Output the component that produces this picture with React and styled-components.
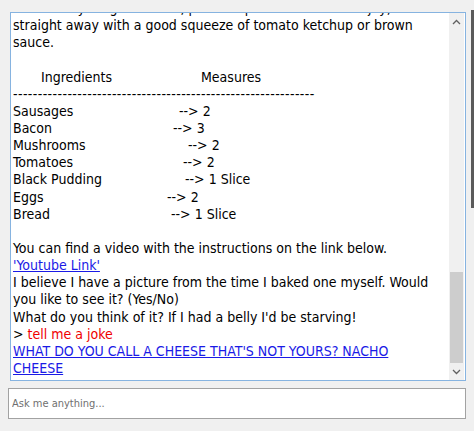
import React from 'react'
import styled, { createGlobalStyle } from 'styled-components'

const GlobalStyle = createGlobalStyle`
  html, body {
    margin: 0;
    padding: 0;
    background: #f0f0f0;
  }
`

const Page = styled.div`
  position: relative;
  display: flex;
  flex-direction: column;
  gap: 7px;
  padding-top: 12px;
  width: 474px;
  height: 431px;
  box-sizing: border-box;
  font-family: "DejaVu Sans Condensed", "DejaVu Sans", sans-serif;
`

/* edge of the window behind this one, peeking out on the right */
const BehindEdge = styled.div`
  position: absolute;
  top: 10px;
  right: 0;
  width: 3px;
  height: 198px;
  background: #5a5a5a;
`

const ChatBox = styled.div`
  display: flex;
  height: 369px;
  margin: 0 8px 0 10px;
  border: 1px solid #86b3e0;
  background: #fff;
  box-sizing: border-box;
`

const Transcript = styled.div`
  flex: 1;
  overflow: hidden;
  padding-left: 2px;
  font-size: 14px;
  line-height: 17.15px;
  color: #000;
`

const Lines = styled.div`
  margin-top: -13px;
`

const Line = styled.div`
  white-space: pre;
  height: 17.15px;
`

const Wrap = styled.div`
  white-space: normal;
`

const Link = styled.a`
  color: #1a1ae6;
  text-decoration: underline;
  cursor: pointer;
`

const Red = styled.span`
  color: #f00000;
`

const Cell = styled.span`
  display: inline-block;
  width: ${({ w }) => w}px;
  white-space: pre;
`

const Dashes = styled.div`
  width: 302px;
  overflow: hidden;
  white-space: nowrap;
  letter-spacing: 0.4px;
`

const Scrollbar = styled.div`
  width: 15px;
  margin-right: 1px;
  display: flex;
  flex-direction: column;
  background: #f0f0f0;
`

const ArrowButton = styled.div`
  height: 17px;
  display: flex;
  align-items: center;
  justify-content: center;
  color: #606060;
`

const Track = styled.div`
  flex: 1;
  display: flex;
  flex-direction: column;
  justify-content: flex-end;
  padding: 0 1px;
`

const Thumb = styled.div`
  height: 91px;
  background: #cdcdcd;
`

const Input = styled.input`
  height: 31px;
  margin: 0 8px;
  padding: 0 3px;
  border: 1px solid #a2a2a2;
  box-sizing: border-box;
  background: #fff;
  font-family: "DejaVu Sans Condensed", "DejaVu Sans", sans-serif;
  font-size: 11px;
  outline: none;

  &::placeholder {
    color: #6f6f6f;
  }
`

const Chevron = ({ up }) => (
  <svg width="9" height="6" viewBox="0 0 9 6">
    <path
      d={up ? 'M1 5 L4.5 1.5 L8 5' : 'M1 1 L4.5 4.5 L8 1'}
      fill="none"
      stroke="currentColor"
      strokeWidth="1.3"
    />
  </svg>
)

const ingredients = [
  { name: 'Sausages', at: 166, qty: '2' },
  { name: 'Bacon', at: 160, qty: '3' },
  { name: 'Mushrooms', at: 175, qty: '2' },
  { name: 'Tomatoes', at: 170, qty: '2' },
  { name: 'Black Pudding', at: 172, qty: '1 Slice' },
  { name: 'Eggs', at: 154, qty: '2' },
  { name: 'Bread', at: 158, qty: '1 Slice' },
]

export default function App() {
  return (
    <>
      <GlobalStyle />
      <Page>
        <BehindEdge />
        <ChatBox>
          <Transcript>
            <Lines>
              <Line>Once everything is cooked, plate it up and serve it to enjoy,</Line>
              <Line>straight away with a good squeeze of tomato ketchup or brown</Line>
              <Line>sauce.</Line>
              <Line> </Line>
              <Line>
                <Cell w={28} />
                <Cell w={160}>Ingredients</Cell>
                Measures
              </Line>
              <Dashes>{'-'.repeat(90)}</Dashes>
              {ingredients.map(i => (
                <Line key={i.name}>
                  <Cell w={i.at}>{i.name}</Cell>
                  {'--> ' + i.qty}
                </Line>
              ))}
              <Line> </Line>
              <Line>You can find a video with the instructions on the link below.</Line>
              <Line><Link>'Youtube Link'</Link></Line>
              <Wrap>I believe I have a picture from the time I baked one myself. Would you like to see it? (Yes/No)</Wrap>
              <Line>What do you think of it? If I had a belly I'd be starving!</Line>
              <Line>&gt; <Red>tell me a joke</Red></Line>
              <Wrap><Link>WHAT DO YOU CALL A CHEESE THAT'S NOT YOURS? NACHO<br />CHEESE</Link></Wrap>
            </Lines>
          </Transcript>
          <Scrollbar>
            <ArrowButton><Chevron up /></ArrowButton>
            <Track>
              <Thumb />
            </Track>
            <ArrowButton><Chevron /></ArrowButton>
          </Scrollbar>
        </ChatBox>
        <Input placeholder="Ask me anything..." />
      </Page>
    </>
  )
}
